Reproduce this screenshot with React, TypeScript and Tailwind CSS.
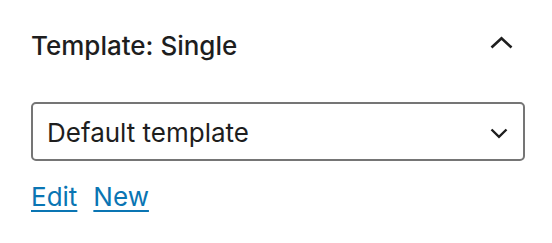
export default function App() {
  return (
    <div className="w-[552px] h-[243px] bg-white text-[#1e1e1e] font-['Inter','Liberation_Sans',sans-serif]">
      <div className="pl-[31px] pr-[27px] pt-[28px]">
        {/* Panel header */}
        <div className="flex items-center justify-between h-[36px]">
          <h2 className="text-[26px] font-medium leading-none">Template: Single</h2>
          <svg width="23" height="13" viewBox="0 0 23 13" className="mr-[12px] mb-[8px]">
            <path d="M1.5 11.5 L11.5 2.2 L21.5 11.5" fill="none" stroke="#1e1e1e" strokeWidth="2.6" />
          </svg>
        </div>

        {/* Template select */}
        <div className="mt-[38px] flex items-center justify-between h-[59px] border-2 border-[#757575] rounded-[5px] pl-[14px] pr-[15px]">
          <span className="text-[26px] leading-none pt-[2px]">Default template</span>
          <svg width="18" height="11" viewBox="0 0 18 11" className="mt-[3px]">
            <path d="M1.5 1.5 L9 8.8 L16.5 1.5" fill="none" stroke="#1e1e1e" strokeWidth="2.4" />
          </svg>
        </div>

        {/* Actions */}
        <div className="mt-[23px] flex gap-[16px] text-[26px] leading-none text-[#0a75b3]">
          <a href="#" className="underline underline-offset-[4px] decoration-2">Edit</a>
          <a href="#" className="underline underline-offset-[4px] decoration-2">New</a>
        </div>
      </div>
    </div>
  );
}
